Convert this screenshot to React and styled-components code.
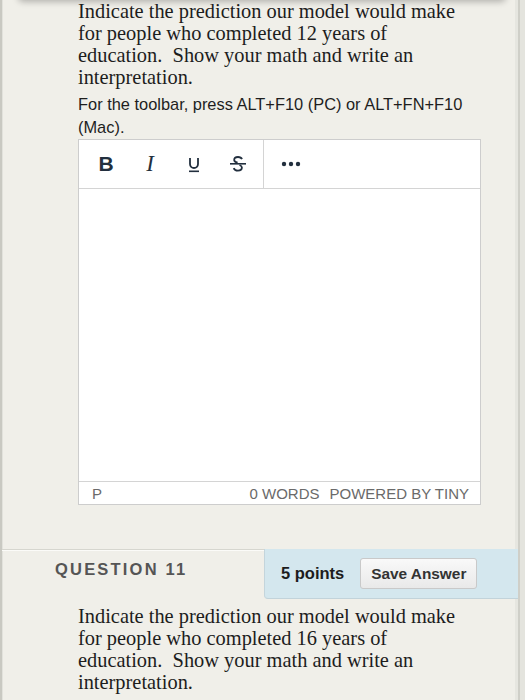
import React from "react";
import styled, { createGlobalStyle } from "styled-components";

const Global = createGlobalStyle`
  html, body { margin: 0; padding: 0; background: #e4e4de; }
  body { overflow: hidden; }
`;

const Page = styled.div`
  position: relative;
  width: 516px;
  height: 700px;
  background: #f0efe9;
  border-left: 2px solid #c9c9c2;
  border-right: 2px solid #cfcfc8;
  box-shadow: inset 1px 0 0 #e2e2dc, inset -3px 0 0 #e6e6e0;
  overflow: hidden;
`;

const TopShadow = styled.div`
  position: absolute;
  left: 16px;
  right: 12px;
  top: -10px;
  height: 10px;
  border-radius: 6px;
  box-shadow: 0 2px 6px rgba(0, 0, 0, 0.25);
`;

const Body = styled.div`
  padding: 0 0 0 76px;
  width: 400px;
`;

const QText = styled.p`
  margin: 0;
  font-family: "Liberation Serif", "Times New Roman", serif;
  font-size: 20.4px;
  line-height: 22px;
  color: #1d1d1d;
  padding-top: ${(p) => p.$top || 0}px;
`;

const Hint = styled.p`
  margin: 5px 0 0;
  font-family: "Liberation Sans", Arial, sans-serif;
  font-size: 16.4px;
  line-height: 23px;
  color: #1e1e1e;
`;

const Editor = styled.div`
  margin-top: 0;
  width: 401px;
  height: 364px;
  background: #fff;
  border: 1px solid #cdcdcd;
  display: flex;
  flex-direction: column;
`;

const Toolbar = styled.div`
  display: flex;
  height: 48px;
  border-bottom: 1px solid #d4d4d4;
`;

const Group = styled.div`
  display: flex;
  align-items: center;
  padding: 0 ${(p) => p.$padR ?? 5}px 0 ${(p) => p.$padL ?? 5}px;
  border-right: ${(p) => (p.$sep ? "1px solid #d4d4d4" : "none")};
`;

const ToolBtn = styled.span`
  width: 44px;
  display: flex;
  justify-content: center;
  align-items: center;
  font-family: ${(p) => (p.$serif ? '"Liberation Serif", serif' : '"Liberation Sans", Arial, sans-serif')};
  font-size: ${(p) => p.$size || 20}px;
  font-weight: ${(p) => (p.$bold ? 700 : 400)};
  font-style: ${(p) => (p.$italic ? "italic" : "normal")};
  color: #222f3e;
`;

const Area = styled.div`
  flex: 1;
`;

const Status = styled.div`
  height: 22px;
  border-top: 1px solid #d4d4d4;
  display: flex;
  align-items: center;
  justify-content: space-between;
  padding: 0 11px 0 13px;
  font-family: "Liberation Sans", Arial, sans-serif;
  font-size: 15px;
  color: #6a6a6a;
`;

const StatusRight = styled.span`
  display: flex;
  gap: 10px;
`;

const HeaderRow = styled.div`
  margin-top: 44px;
  display: flex;
  height: 50px;
`;

const HeaderLeft = styled.div`
  flex: 0 0 262px;
  border-top: 1px solid #d6d6cf;
  box-shadow: inset 0 1px 0 #fbfbf8;
  padding: 10px 0 0 53px;
  box-sizing: border-box;
  font-family: "Liberation Sans", Arial, sans-serif;
  font-weight: 700;
  font-size: 16.5px;
  letter-spacing: 2.2px;
  color: #555;
`;

const HeaderRight = styled.div`
  flex: 1;
  background: #d4e7ee;
  border-left: 1px solid #c4d5dc;
  border-bottom: 1px solid #c2d3da;
  border-bottom-left-radius: 4px;
  display: flex;
  align-items: center;
  padding: 0 0 0 16px;
  gap: 16px;
`;

const Points = styled.span`
  font-family: "Liberation Sans", Arial, sans-serif;
  font-weight: 700;
  font-size: 16.5px;
  color: #1c1c1c;
`;

const SaveBtn = styled.button`
  height: 31px;
  width: 117px;
  padding: 0;
  border: 1px solid #c9c9c9;
  border-radius: 3px;
  background: linear-gradient(#f9f9f9, #e9e9e9);
  font-family: "Liberation Sans", Arial, sans-serif;
  font-weight: 700;
  font-size: 15.4px;
  color: #333;
`;

export default function App() {
  return (
    <>
      <Global />
      <Page>
        <TopShadow />
        <Body>
          <QText>
            Indicate the prediction our model would make for people who completed 12 years of
            education.&nbsp; Show your math and write an interpretation.
          </QText>
          <Hint>For the toolbar, press ALT+F10 (PC) or ALT+FN+F10 (Mac).</Hint>
          <Editor>
            <Toolbar>
              <Group $sep $padL={5} $padR={3}>
                <ToolBtn $bold $size={21}>B</ToolBtn>
                <ToolBtn $serif $italic $size={23}>I</ToolBtn>
                <ToolBtn>
                  <svg width="14" height="18" viewBox="0 0 14 18">
                    <path d="M3 3v6a4 4 0 0 0 8 0V3" fill="none" stroke="#222f3e" strokeWidth="1.8" />
                    <rect x="2" y="15.5" width="10" height="1.6" fill="#222f3e" />
                  </svg>
                </ToolBtn>
                <ToolBtn>
                  <svg width="18" height="20" viewBox="0 0 18 20">
                    <path d="M13 5.2c-.6-1.4-2-2.2-4-2.2-2.3 0-3.8 1.2-3.8 2.9 0 1.5 1 2.2 3.4 2.8M10.5 11c1.6.6 2.4 1.3 2.4 2.6 0 1.8-1.6 3-4 3-2.1 0-3.6-.9-4.2-2.5" fill="none" stroke="#222f3e" strokeWidth="1.8" />
                    <rect x="1" y="9" width="16" height="1.6" fill="#222f3e" />
                  </svg>
                </ToolBtn>
              </Group>
              <Group $padL={5}>
                <ToolBtn>
                  <svg width="20" height="6" viewBox="0 0 20 6">
                    <circle cx="3" cy="3" r="2.2" fill="#222f3e" />
                    <circle cx="10" cy="3" r="2.2" fill="#222f3e" />
                    <circle cx="17" cy="3" r="2.2" fill="#222f3e" />
                  </svg>
                </ToolBtn>
              </Group>
            </Toolbar>
            <Area />
            <Status>
              <span>P</span>
              <StatusRight>
                <span>0 WORDS</span>
                <span>POWERED BY TINY</span>
              </StatusRight>
            </Status>
          </Editor>
        </Body>
        <HeaderRow>
          <HeaderLeft>QUESTION 11</HeaderLeft>
          <HeaderRight>
            <Points>5 points</Points>
            <SaveBtn>Save Answer</SaveBtn>
          </HeaderRight>
        </HeaderRow>
        <Body>
          <QText $top={6}>
            Indicate the prediction our model would make for people who completed 16 years of
            education.&nbsp; Show your math and write an interpretation.
          </QText>
        </Body>
      </Page>
    </>
  );
}
